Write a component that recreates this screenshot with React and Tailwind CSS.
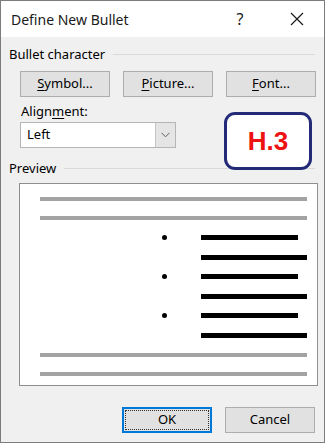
import React from 'react';

const font = { fontFamily: '"Noto Sans", "Open Sans", sans-serif' };

const SectionLabel = ({ text }) => (
    <div className="flex items-center h-4 text-[13px] text-black leading-4">
        <span className="pl-[8px] pr-[8px]">{text}</span>
        <div className="flex-1 h-px bg-[#dadada] mr-[9px]" />
    </div>
);

const DlgButton = ({ pre, u, post, focused }) => (
    <button
        className={
            'w-[90px] h-[26px] bg-[#e1e1e1] text-[13px] text-black flex items-center justify-center ' +
            (focused ? 'border-2 border-[#0078d7] p-px' : 'border border-[#adadad]')
        }
    >
        {focused ? (
            <span className="w-full h-full flex items-center justify-center border border-dotted border-[#333]">
                {pre}
            </span>
        ) : (
            <span>
                {pre}
                {u && <span className="underline underline-offset-2">{u}</span>}
                {post}
            </span>
        )}
    </button>
);

const GrayRow = () => (
    <div className="h-[19.5px] flex items-center">
        <div className="w-full h-[4px] bg-[#a3a3a3]" />
    </div>
);

const BulletRow = () => (
    <div className="h-[19.5px] flex items-center">
        <div className="w-[5px] h-[5px] rounded-full bg-black ml-[122px]" />
        <div className="w-[97px] h-[5px] bg-black ml-[34px]" />
    </div>
);

const ContRow = () => (
    <div className="h-[19.5px] flex items-center">
        <div className="w-[106px] h-[5px] bg-black ml-[161px]" />
    </div>
);

export default function App() {
    return (
        <div style={font} className="relative w-[325px] h-[443px] bg-[#f0f0f0] border border-[#7c7c7c] overflow-hidden">
            <div className="h-[36px] bg-white flex items-center">
                <span className="pl-[10px] text-[14px] text-[#1a1a1a] flex-1">Define New Bullet</span>
                <span className="text-[16px] text-[#1a1a1a] w-[12px] text-center mr-[44px]">?</span>
                <svg width="14" height="14" viewBox="0 0 14 14" className="mr-[20px]">
                    <path d="M1 1 L13 13 M13 1 L1 13" stroke="#1a1a1a" strokeWidth="1.2" fill="none" />
                </svg>
            </div>

            <div className="pt-[9px]">
                <SectionLabel text="Bullet character" />
                <div className="flex gap-[13px] pl-[19px] mt-[9px]">
                    <DlgButton pre="" u="S" post="ymbol..." />
                    <DlgButton pre="" u="P" post="icture..." />
                    <DlgButton pre="" u="F" post="ont..." />
                </div>

                <div className="pl-[20px] mt-[6px] h-4 text-[13px] leading-4 text-black">
                    Align<span className="underline underline-offset-2">m</span>ent:
                </div>
                <div className="ml-[19px] mt-[3px] w-[156px] h-[26px] bg-white border border-[#b5b5b5] flex items-center">
                    <span className="flex-1 pl-[6px] text-[13px] text-black">Left</span>
                    <div className="w-[20px] h-full bg-[#e5e5e5] border-l border-[#c5c5c5] flex items-center justify-center">
                        <svg width="9" height="6" viewBox="0 0 9 6">
                            <path d="M0.5 0.8 L4.5 4.8 L8.5 0.8" stroke="#606060" strokeWidth="1" fill="none" />
                        </svg>
                    </div>
                </div>

                <div className="mt-[12px]">
                    <SectionLabel text="Preview" />
                </div>
                <div className="ml-[18px] mt-[7px] w-[299px] h-[203px] bg-white border border-[#8e8e8e] pt-[5px] pl-[20px] pr-[10px]">
                    <GrayRow />
                    <GrayRow />
                    <BulletRow />
                    <ContRow />
                    <BulletRow />
                    <ContRow />
                    <BulletRow />
                    <ContRow />
                    <GrayRow />
                    <GrayRow />
                </div>

                <div className="flex justify-end gap-[13px] pr-[9px] mt-[21px]">
                    <DlgButton pre="OK" focused />
                    <DlgButton pre="" u="" post="Cancel" />
                </div>
            </div>

            <div className="absolute left-[223px] top-[111px] w-[88px] h-[58px] bg-white border-[3px] border-[#232a78] rounded-[11px] flex items-center justify-center">
                <span className="text-[26px] font-bold text-[#ee1111]" style={{ fontFamily: '"Liberation Sans", Arial, sans-serif' }}>
                    H.3
                </span>
            </div>
        </div>
    );
}
